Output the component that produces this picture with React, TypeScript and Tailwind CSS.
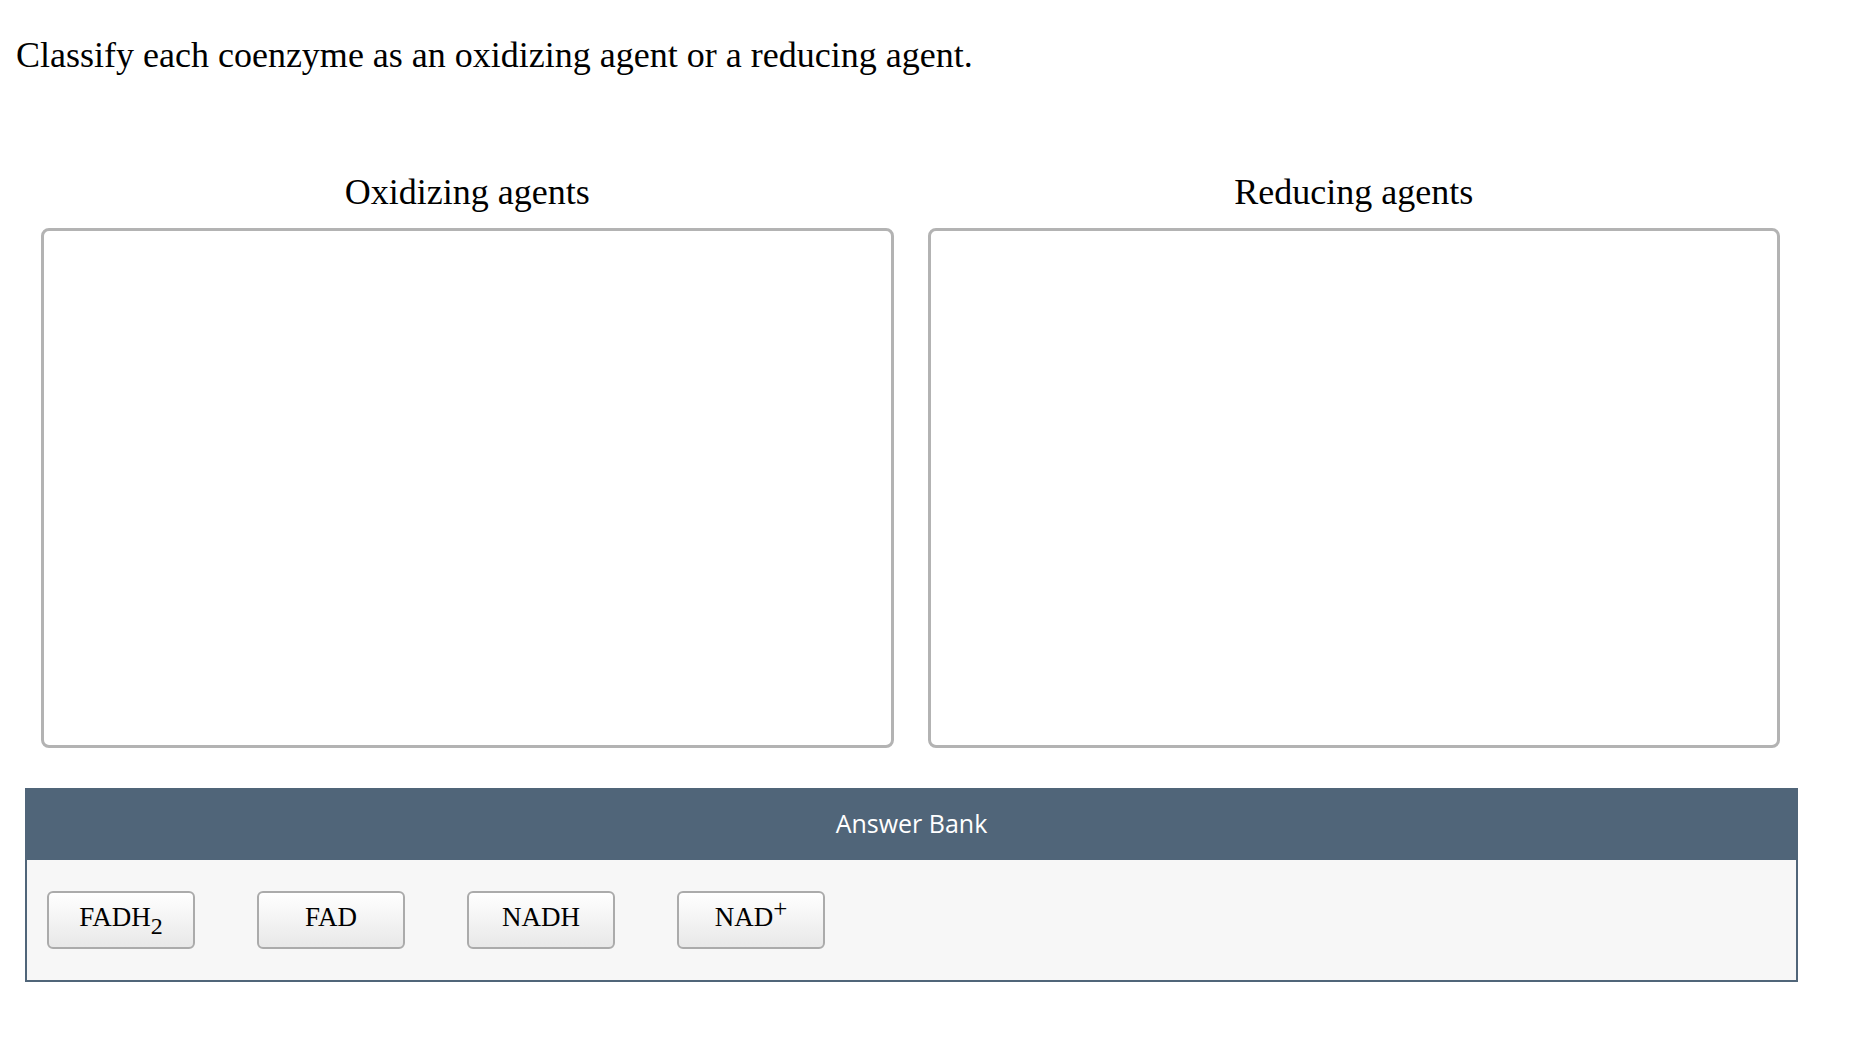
import React from "react";

const serif = { fontFamily: '"Liberation Serif", "Times New Roman", serif' };
const sans = { fontFamily: '"Open Sans", "Noto Sans", sans-serif' };

type Item = { key: string; base: string; sub?: string; sup?: string };

const items: Item[] = [
  { key: "fadh2", base: "FADH", sub: "2" },
  { key: "fad", base: "FAD" },
  { key: "nadh", base: "NADH" },
  { key: "nad", base: "NAD", sup: "+" },
];

function Chip({ item }: { item: Item }) {
  return (
    <div
      className="flex h-[58px] w-[148px] items-center justify-center rounded-[6px] border-2 border-[#ababab] bg-linear-to-b from-white to-[#e8e8e8] pb-[6px] text-[27px] leading-none text-black"
      style={serif}
    >
      <span className="whitespace-nowrap">
        {item.base}
        {item.sub && (
          <span className="relative top-[8px] text-[24px] leading-none">{item.sub}</span>
        )}
        {item.sup && (
          <span className="relative top-[-9px] text-[25px] leading-none">{item.sup}</span>
        )}
      </span>
    </div>
  );
}

function Bin({ title }: { title: string }) {
  return (
    <div className="flex flex-col">
      <h2 className="text-center text-[36px] font-normal leading-none text-black" style={serif}>
        {title}
      </h2>
      <div className="mt-[18px] h-[520px] rounded-[8px] border-[3px] border-[#b3b3b3] bg-white" />
    </div>
  );
}

export default function App() {
  return (
    <div className="h-[1050px] w-[1856px] bg-white">
      <p className="pl-[16px] pt-[37px] text-[36px] leading-none text-black" style={serif}>
        Classify each coenzyme as an oxidizing agent or a reducing agent.
      </p>

      <div className="ml-[41px] mt-[101px] grid w-[1739px] grid-cols-2 gap-[34px]">
        <Bin title="Oxidizing agents" />
        <Bin title="Reducing agents" />
      </div>

      <div className="ml-[25px] mt-[40px] w-[1773px]">
        <div
          className="flex h-[72px] items-center justify-center bg-[#506579] text-[25px] text-white"
          style={sans}
        >
          Answer Bank
        </div>
        <div className="flex gap-[62px] border-x-2 border-b-2 border-[#506579] bg-[#f7f7f7] pb-[31px] pl-[20px] pt-[31px]">
          {items.map((it) => (
            <Chip key={it.key} item={it} />
          ))}
        </div>
      </div>
    </div>
  );
}
